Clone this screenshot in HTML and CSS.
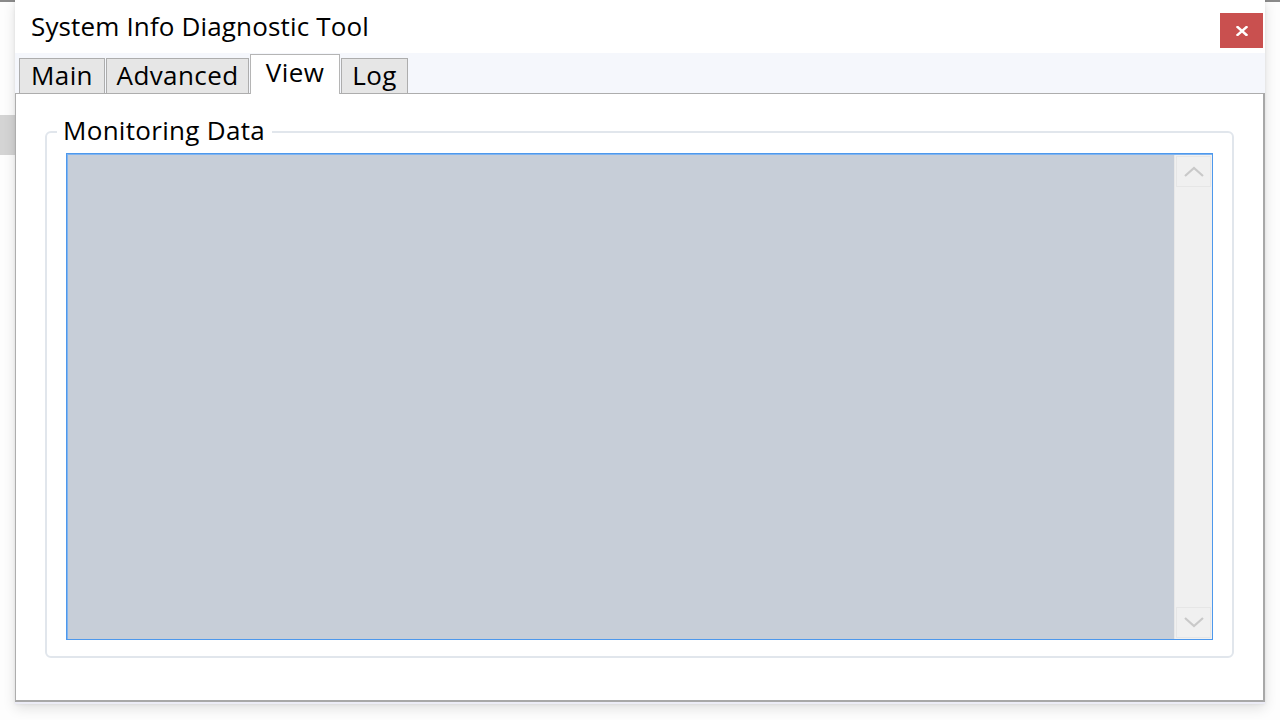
FILE: index.html
```html
<!DOCTYPE html>
<html>
<head>
<meta charset="utf-8">
<title>System Info Diagnostic Tool</title>
<link rel="stylesheet" href="styles.css">
</head>
<body>
<div class="desktop">
  <div class="desk-strip"></div>
  <div class="window">
    <div class="titlebar">
      <span class="title">System Info Diagnostic Tool</span>
      <button class="close" aria-label="Close">
        <svg width="12" height="10" viewBox="0 0 12 10"><path d="M1.5 1 L10.5 9 M10.5 1 L1.5 9" stroke="#fff" stroke-width="2.4" stroke-linecap="square"/></svg>
      </button>
    </div>
    <div class="tabstrip">
      <div class="tab tab-main">Main</div>
      <div class="tab tab-adv">Advanced</div>
      <div class="tab tab-view active">View</div>
      <div class="tab tab-log">Log</div>
    </div>
    <div class="panel">
      <fieldset class="group">
        <legend>Monitoring Data</legend>
        <div class="textbox">
          <div class="textarea"></div>
          <div class="scrollbar">
            <div class="sb-btn">
              <svg width="22" height="11" viewBox="0 0 22 11"><path d="M2 10 L11 2 L20 10" fill="none" stroke="#c9c9c9" stroke-width="2.2"/></svg>
            </div>
            <div class="sb-track"></div>
            <div class="sb-btn">
              <svg width="22" height="11" viewBox="0 0 22 11"><path d="M2 1 L11 9 L20 1" fill="none" stroke="#c9c9c9" stroke-width="2.2"/></svg>
            </div>
          </div>
        </div>
      </fieldset>
    </div>
  </div>
</div>
</body>
</html>
```
FILE: styles.css
```css
html, body {
  margin: 0;
  padding: 0;
}
body {
  width: 1280px;
  height: 720px;
  overflow: hidden;
  background: #fbfbfb;
  font-family: "Open Sans", "Noto Sans", "Liberation Sans", sans-serif;
  color: #000;
}
.desktop {
  position: relative;
  width: 1280px;
  height: 720px;
  border-top: 2px solid #8a8a8a;
  box-sizing: border-box;
  background: #fdfdfd;
}
.desk-strip {
  position: absolute;
  left: 0;
  top: 113px;
  width: 16px;
  height: 40px;
  background: #d4d4d4;
}
.window {
  position: relative;
  margin-left: 15px;
  margin-top: -2px;
  width: 1250px;
  height: 704px;
  box-sizing: border-box;
  background: #fff;
  display: flex;
  flex-direction: column;
  box-shadow: 0 4px 12px rgba(0,0,0,0.12), 0 0 3px rgba(0,0,0,0.08);
  border-bottom: 2px solid #ececf6;
}
.titlebar {
  height: 53px;
  flex: none;
  display: flex;
  align-items: flex-start;
  justify-content: space-between;
  padding-left: 16px;
  padding-right: 2px;
  box-sizing: border-box;
  background: #fff;
}
.title {
  font-size: 26px;
  line-height: 30px;
  margin-top: 11px;
  letter-spacing: 0.15px;
}
.close {
  margin-top: 13px;
  width: 43px;
  height: 35px;
  border: none;
  padding: 0;
  background: #c9504f;
  display: flex;
  align-items: center;
  justify-content: center;
}
.tabstrip {
  height: 40px;
  flex: none;
  background: #f5f7fc;
  display: flex;
  align-items: flex-end;
  padding-left: 4px;
  box-sizing: border-box;
  position: relative;
  z-index: 1;
}
.tab {
  height: 35px;
  box-sizing: border-box;
  background: #e6e6e6;
  border: 1px solid #adadad;
  border-bottom: none;
  font-size: 26px;
  line-height: 32px;
  letter-spacing: 0.4px;
  text-align: center;
  margin-right: 1px;
}
.tab-main { width: 86px; }
.tab-adv { width: 143px; }
.tab-view { width: 90px; }
.tab-log { width: 67px; }
.tab.active {
  height: 40px;
  margin-bottom: -1px;
  background: #fff;
  border-color: #b5b5b5;
  line-height: 35px;
}
.panel {
  flex: 1;
  background: #fff;
  border: 1px solid #adadad;
  border-right: 2px solid #a8a8a8;
  border-bottom: 2px solid #a8a8a8;
  padding: 22px 29px 42px 29px;
  box-sizing: border-box;
  display: flex;
  flex-direction: column;
}
.group {
  flex: 1;
  margin: 0;
  border: 2px solid #e1e6ec;
  border-radius: 6px;
  padding: 5px 19px 16px 19px;
  display: flex;
  flex-direction: column;
  min-height: 0;
}
.group legend {
  font-size: 26px;
  line-height: 28px;
  letter-spacing: 0.3px;
  padding: 0 7px 4px 6px;
  margin-left: -9px;
}
.textbox {
  flex: 1;
  display: flex;
  border: 1px solid #4d98ec;
  box-shadow: inset 1px 1px 0 #7fb3ef;
  min-height: 0;
}
.textarea {
  flex: 1;
  background: #c7ced8;
  margin: 1px 0 0 1px;
}
.scrollbar {
  width: 37px;
  background: #f0f0f0;
  border-left: 1px solid #e8e8e8;
  display: flex;
  flex-direction: column;
  margin-top: 1px;
}
.sb-btn {
  height: 31px;
  margin: 1px 1px;
  box-sizing: border-box;
  border: 1px solid #e6e6e6;
  display: flex;
  align-items: center;
  justify-content: center;
}
.sb-track {
  flex: 1;
}
```
